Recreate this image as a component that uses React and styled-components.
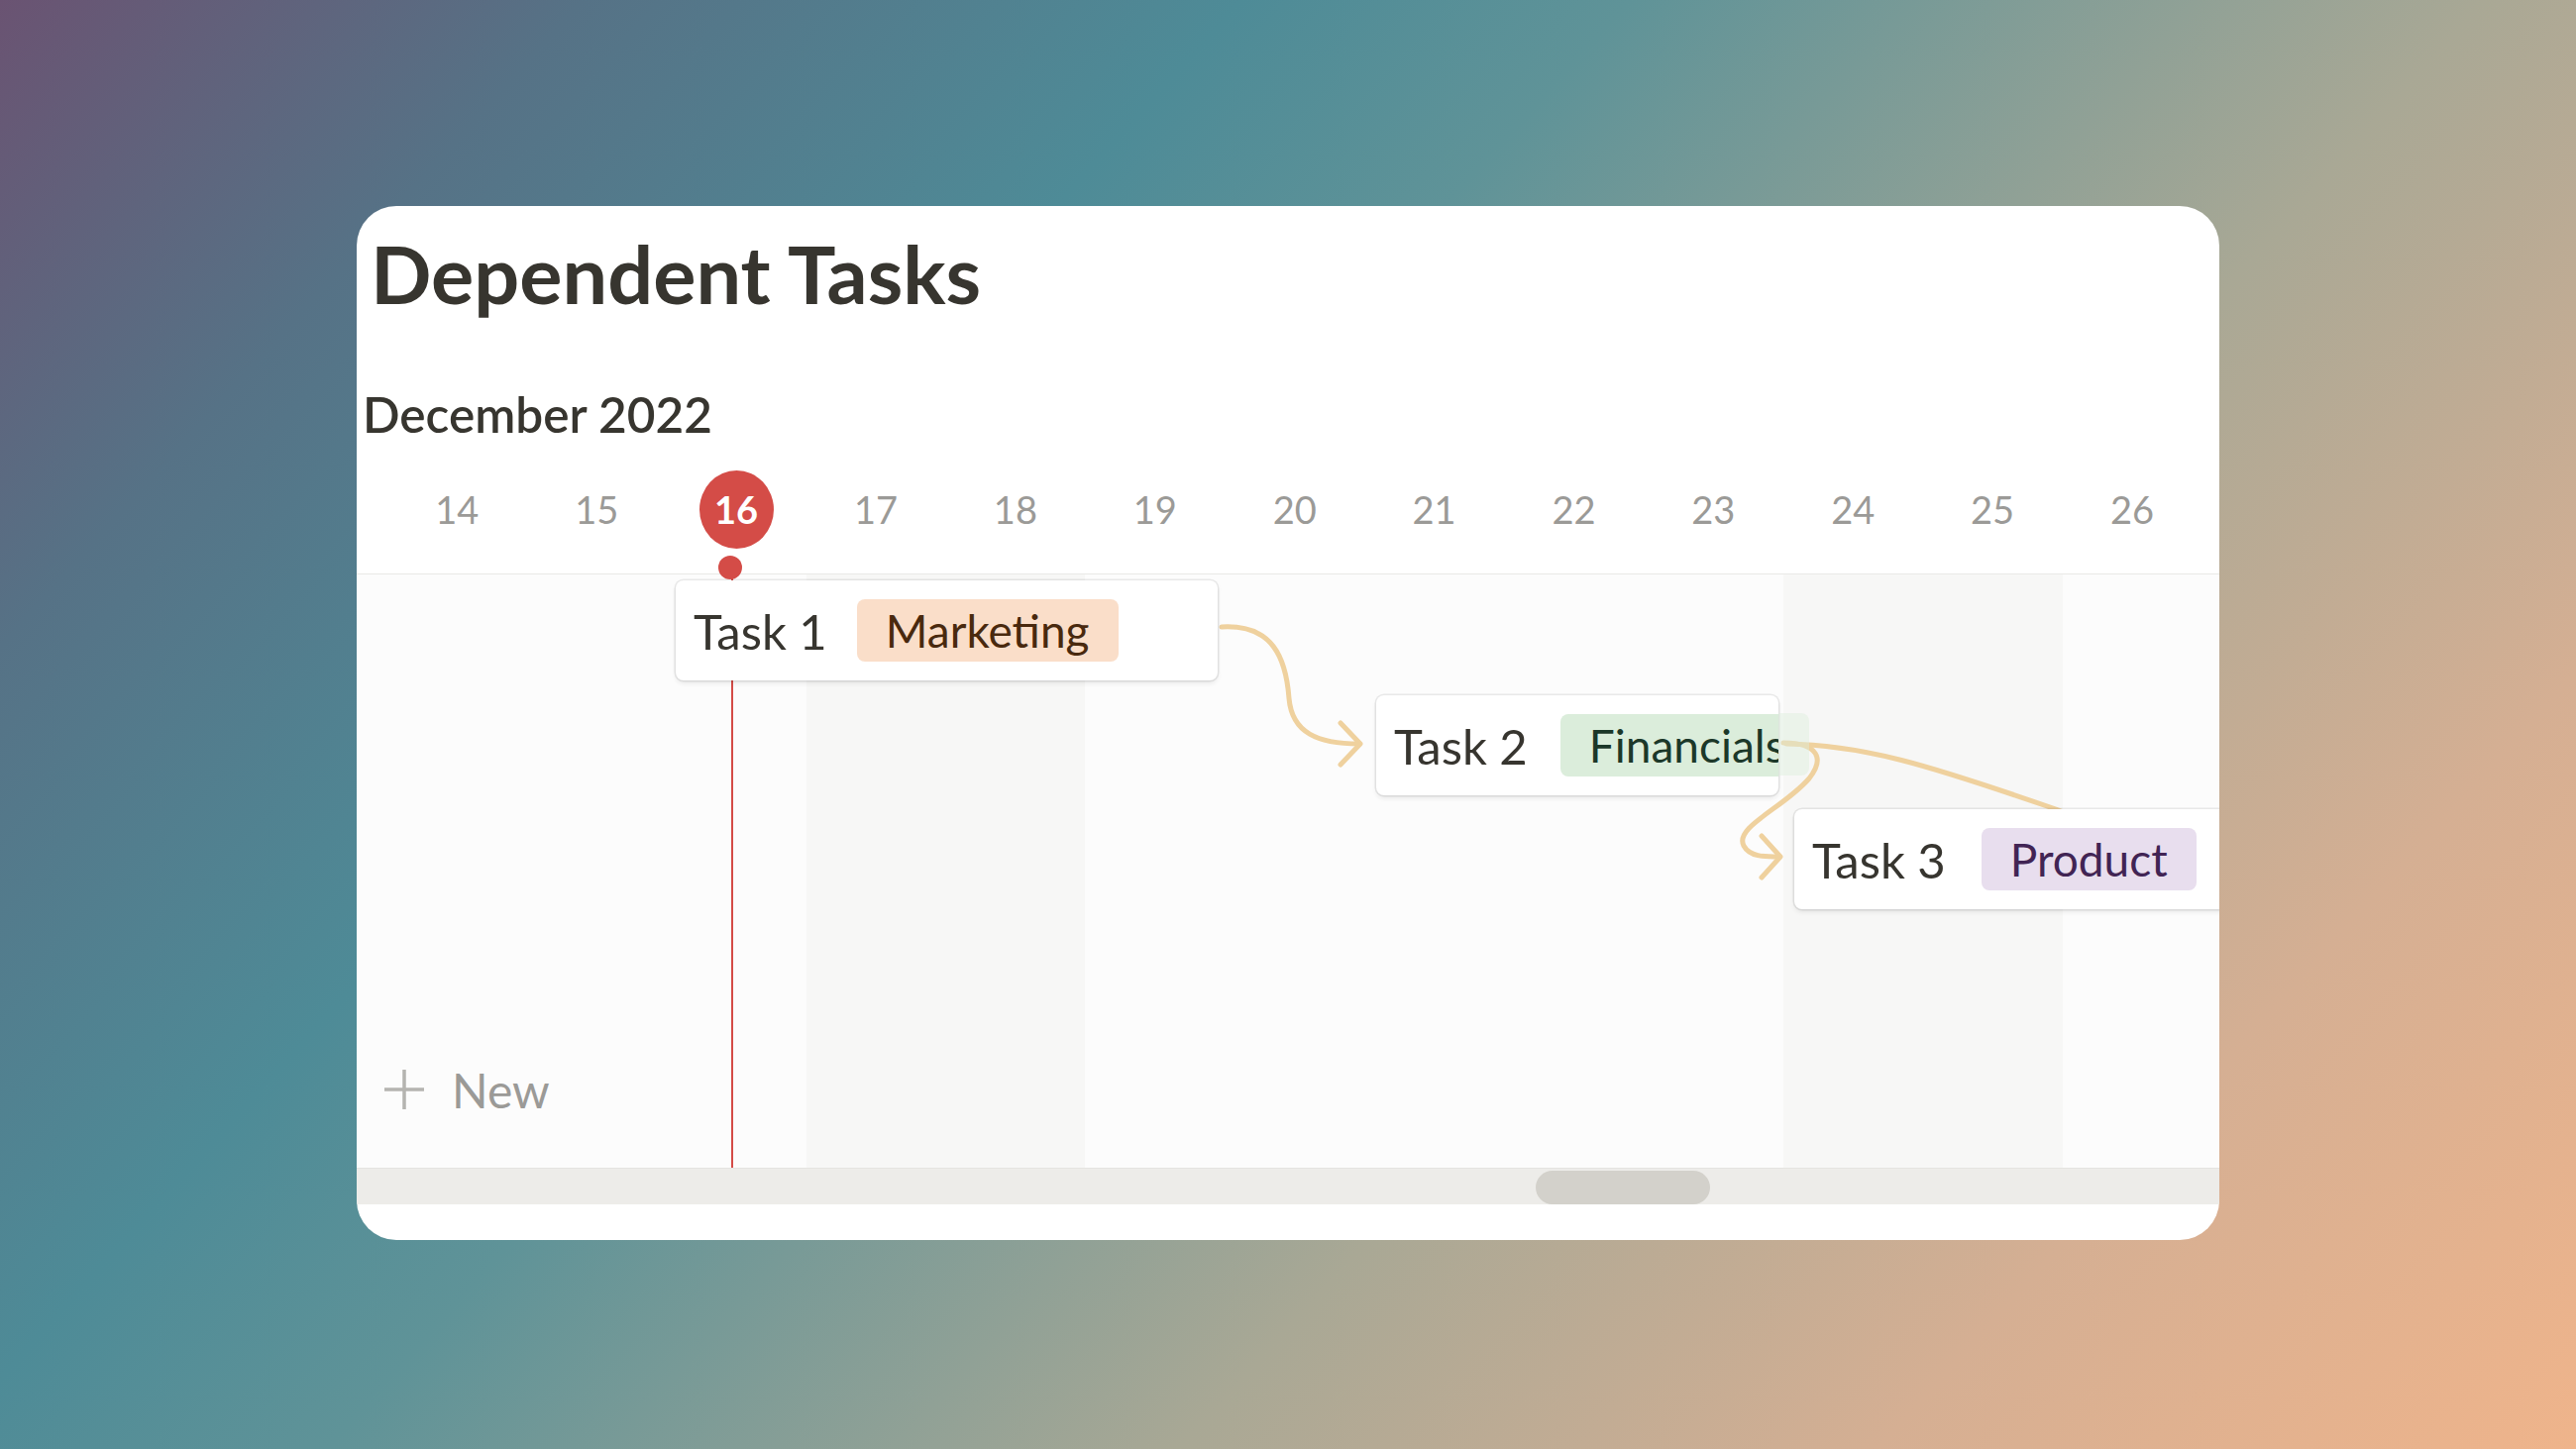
import React from "react";
import styled, { createGlobalStyle } from "styled-components";

const GlobalStyle = createGlobalStyle`
  * { box-sizing: border-box; }
  html, body { margin: 0; padding: 0; }
  body {
    font-family: Lato, "Open Sans", "Noto Sans", sans-serif;
    color: #37352f;
  }
`;

const COL_W = 140.9;
const OFFSET = -110;

const Page = styled.div`
  width: 2600px;
  height: 1463px;
  padding: 208px 0 0 360px;
  background: linear-gradient(
    132deg,
    #6a5372 0%,
    #567286 15%,
    #4e8b97 32%,
    #5f9398 42%,
    #a9a895 64%,
    #d5af93 82%,
    #efb48b 100%
  );
  overflow: hidden;
`;

const Card = styled.div`
  width: 1880px;
  height: 1044px;
  background: #ffffff;
  border-radius: 40px;
  overflow: hidden;
  display: flex;
  flex-direction: column;
`;

const Title = styled.h1`
  margin: 0;
  padding: 28px 0 0 14px;
  font-size: 81px;
  line-height: 80px;
  font-weight: 700;
  color: #37352f;
`;

const Month = styled.div`
  margin-top: 78px;
  padding-left: 6px;
  font-size: 49.5px;
  line-height: 48px;
  font-weight: 600;
  color: #37352f;
`;

const Header = styled.div`
  margin-top: 32px;
  padding-bottom: 25px;
  border-bottom: 1px solid #e9e9e7;
`;

const DayRow = styled.div`
  display: flex;
  margin-left: ${OFFSET}px;
`;

const DayCell = styled.div`
  flex: 0 0 ${COL_W}px;
  height: 80px;
  display: flex;
  align-items: center;
  justify-content: center;
`;

const DayNum = styled.span`
  font-size: 38px;
  line-height: 78px;
  font-weight: 400;
  color: #9b9a97;
`;

const Today = styled.span`
  width: 75px;
  height: 79px;
  border-radius: 50%;
  background: #d44c47;
  color: #ffffff;
  font-size: 38px;
  font-weight: 700;
  display: flex;
  align-items: center;
  justify-content: center;
`;

const Body = styled.div`
  position: relative;
  height: 599px;
`;

const ColumnRow = styled.div`
  display: flex;
  height: 100%;
  margin-left: ${OFFSET}px;
`;

const Column = styled.div`
  flex: 0 0 ${COL_W}px;
  height: 100%;
  background: ${(p) => (p.$weekend ? "#f7f7f6" : "#fcfcfc")};
`;

const Canvas = styled.div`
  position: absolute;
  inset: 0;
  display: flex;
  flex-direction: column;
  justify-content: flex-end;
  padding: 0 0 57px 26px;
`;

const Arrows = styled.svg`
  position: absolute;
  left: 0;
  top: 0;
  width: 1880px;
  height: 599px;
  overflow: visible;
`;

const TodayLine = styled.div`
  position: absolute;
  left: 378px;
  top: 0;
  width: 2px;
  height: 100%;
  background: #d44c47;
`;

const TodayDot = styled.div`
  position: absolute;
  left: 365px;
  top: -19px;
  width: 24px;
  height: 24px;
  border-radius: 50%;
  background: #d44c47;
`;

const TaskCard = styled.div`
  position: absolute;
  height: 101px;
  background: #ffffff;
  border-radius: 8px;
  box-shadow: 0 0 0 1.5px rgba(15, 15, 15, 0.08), 0 3px 5px rgba(15, 15, 15, 0.08);
  padding-left: 18px;
  white-space: nowrap;

  ${(p) =>
    p.$tail &&
    `
    &::after {
      content: "";
      position: absolute;
      left: 100%;
      top: 18px;
      width: 31px;
      height: 63px;
      border-radius: 0 8px 8px 0;
      background: ${p.$tail};
    }
  `}
`;

const Clip = styled.div`
  display: flex;
  align-items: center;
  gap: ${(p) => p.$gap}px;
  overflow: hidden;
  width: 100%;
  height: 100%;
`;

const TaskName = styled.span`
  font-size: 49px;
  font-weight: 400;
  color: #37352f;
  flex: none;
`;

const Tag = styled.span`
  flex: none;
  height: 63px;
  padding: 0 29px;
  border-radius: 8px;
  display: flex;
  align-items: center;
  font-size: 46px;
  font-weight: 400;
  background: ${(p) => p.$bg};
  color: ${(p) => p.$fg};
`;

const NewButton = styled.div`
  display: flex;
  align-items: center;
  gap: 26px;
  height: 44px;
  color: #9b9a97;
  font-size: 48px;
  font-weight: 400;
  position: relative;
`;

const Scrollbar = styled.div`
  height: 37px;
  background: #edece9;
  border-top: 1px solid #e5e4e1;
  padding: 2px 0 0 1190px;
`;

const Thumb = styled.div`
  width: 176px;
  height: 34px;
  border-radius: 17px;
  background: #d3d1cb;
`;

const days = [13, 14, 15, 16, 17, 18, 19, 20, 21, 22, 23, 24, 25, 26, 27];
const weekend = new Set([17, 18, 24, 25]);

const tasks = [
  { name: "Task 1", tag: "Marketing", bg: "#fadec9", fg: "#49290e", left: 322, top: 6, width: 547, gap: 30 },
  { name: "Task 2", tag: "Financials", bg: "#dbeddb", fg: "#1c3829", left: 1029, top: 122, width: 406, gap: 33, tail: "rgba(219,237,219,0.45)" },
  { name: "Task 3", tag: "Product", bg: "#e8deee", fg: "#412454", left: 1451, top: 237, width: 460, gap: 36 },
];

const ARROW = "#efd19e";

export default function App() {
  return (
    <>
      <GlobalStyle />
      <Page>
        <Card>
          <Title>Dependent Tasks</Title>
          <Month>December 2022</Month>
          <Header>
            <DayRow>
              {days.map((d) => (
                <DayCell key={d}>
                  {d === 16 ? <Today>{d}</Today> : d <= 26 && d >= 14 ? <DayNum>{d}</DayNum> : null}
                </DayCell>
              ))}
            </DayRow>
          </Header>
          <Body>
            <ColumnRow>
              {days.map((d) => (
                <Column key={d} $weekend={weekend.has(d)} />
              ))}
            </ColumnRow>
            <Canvas>
              <TodayLine />
              <Arrows viewBox="0 0 1880 599">
                <g fill="none" stroke={ARROW} strokeWidth="5" strokeLinecap="round" strokeLinejoin="round">
                  <path d="M873,53 C925,50 938,85 941,125 C944,160 970,171 1012,171" />
                  <path d="M993,150 L1013,171 L993,192" />
                  <path d="M1440,170 C1475,170 1482,186 1466,206 C1440,236 1390,255 1400,274 C1406,285 1420,285 1436,285" />
                  <path d="M1418,264 L1437,285 L1418,306" />
                  <path d="M1443,171 C1520,172 1585,192 1715,237 L1760,255" />
                </g>
              </Arrows>
              {tasks.map((t) => (
                <TaskCard
                  key={t.name}
                  $tail={t.tail}
                  style={{ left: t.left, top: t.top, width: t.width }}
                >
                  <Clip $gap={t.gap}>
                    <TaskName>{t.name}</TaskName>
                    <Tag $bg={t.bg} $fg={t.fg}>{t.tag}</Tag>
                  </Clip>
                </TaskCard>
              ))}
              <TodayDot />
              <NewButton>
                <svg width="44" height="44" viewBox="0 0 44 44">
                  <path d="M22 2 V42 M2 22 H42" stroke="#b5b4b0" strokeWidth="3.5" />
                </svg>
                <span>New</span>
              </NewButton>
            </Canvas>
          </Body>
          <Scrollbar>
            <Thumb />
          </Scrollbar>
        </Card>
      </Page>
    </>
  );
}
